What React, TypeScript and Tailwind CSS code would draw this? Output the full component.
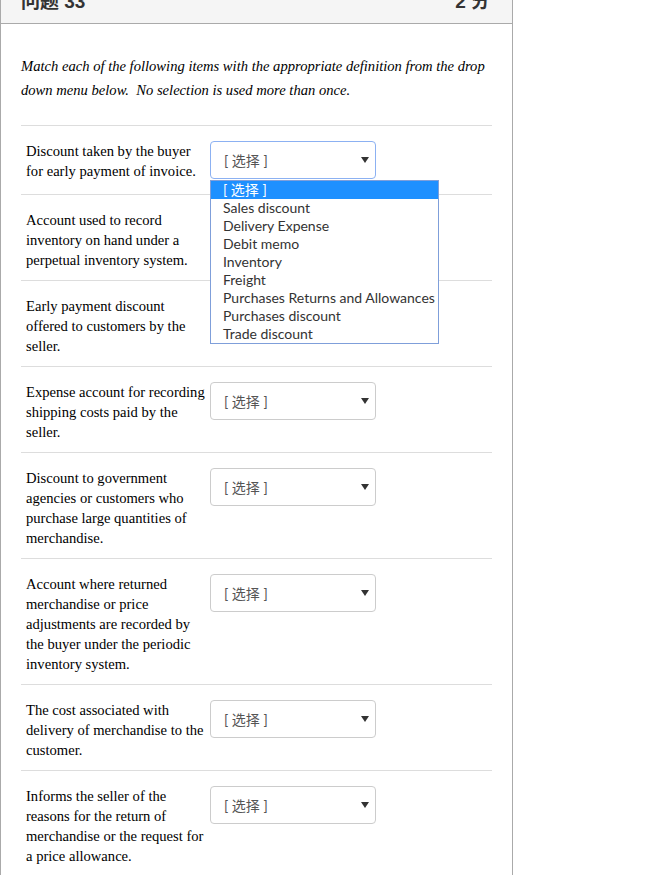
import React from "react";

const rows: { text: string; open?: boolean; hidden?: boolean }[] = [
  { text: "Discount taken by the buyer for early payment of invoice.", open: true },
  { text: "Account used to record inventory on hand under a perpetual inventory system.", hidden: true },
  { text: "Early payment discount offered to customers by the seller.", hidden: true },
  { text: "Expense account for recording shipping costs paid by the seller." },
  { text: "Discount to government agencies or customers who purchase large quantities of merchandise." },
  { text: "Account where returned merchandise or price adjustments are recorded by the buyer under the periodic inventory system." },
  { text: "The cost associated with delivery of merchandise to the customer." },
  { text: "Informs the seller of the reasons for the return of merchandise or the request for a price allowance." },
];

const options = [
  "[ 选择 ]",
  "Sales discount",
  "Delivery Expense",
  "Debit memo",
  "Inventory",
  "Freight",
  "Purchases Returns and Allowances",
  "Purchases discount",
  "Trade discount",
];

const sans = "font-['Lato','Noto_Sans_CJK_SC',sans-serif]";

function Select({ open, hidden }: { open?: boolean; hidden?: boolean }) {
  return (
    <div className="relative mb-[5px]">
      <div
        className={`w-[166px] h-[38px] rounded-[4px] border flex items-center pl-[13px] text-[14px] text-[#555] ${sans} ${
          open ? "border-[#8cb1f2]" : "border-[#cccccc]"
        } ${hidden ? "invisible" : ""}`}
      >
        [ 选择 ]
      </div>
      <div
        className={`absolute right-[7px] top-[16px] w-0 h-0 border-l-[4px] border-r-[4px] border-t-[6px] border-l-transparent border-r-transparent border-t-[#333] ${
          hidden ? "invisible" : ""
        }`}
      />
      {open && (
        <div className={`absolute left-0 top-[39px] z-10 w-[229px] bg-white border border-[#7f9fda] ${sans}`}>
          {options.map((o, i) => (
            <div
              key={o}
              className={`h-[18px] leading-[18px] pl-[12px] text-[14px] whitespace-nowrap ${
                i === 0 ? "bg-[#1e90ff] text-white" : "text-[#333]"
              }`}
            >
              {o}
            </div>
          ))}
        </div>
      )}
    </div>
  );
}

export default function App() {
  return (
    <div className="w-[658px] h-[875px] overflow-hidden bg-white">
      <div className="w-[513px] min-h-[920px] -mt-[20px] border-l border-r border-[#aaaaaa]">
        <div className="h-[44px] bg-[#f5f5f5] border-b border-[#aaaaaa] flex items-center justify-between pl-[20px] pr-[22px] font-['Liberation_Sans','Noto_Sans_CJK_SC',sans-serif] font-bold text-[19px] leading-[20px] text-[#333]">
          <span>问题 33</span>
          <span>2 分</span>
        </div>
        <div className="px-[20px] pt-[30px]">
          <p className="font-['Liberation_Serif',serif] italic text-[14.6px] leading-[24px] text-black mb-[23px]">
            Match each of the following items with the appropriate definition from the drop down menu below.&nbsp; No selection is used more than once.
          </p>
          {rows.map((r, i) => (
            <div key={i} className="border-t border-[#dddddd] pt-[15px] pb-[10px] pl-[5px] flex items-start">
              <div className="w-[184px] shrink-0 pr-[2px] font-['Liberation_Serif',serif] text-[14.6px] leading-[20px] text-black">
                {r.text}
              </div>
              <Select open={r.open} hidden={r.hidden} />
            </div>
          ))}
        </div>
      </div>
    </div>
  );
}
